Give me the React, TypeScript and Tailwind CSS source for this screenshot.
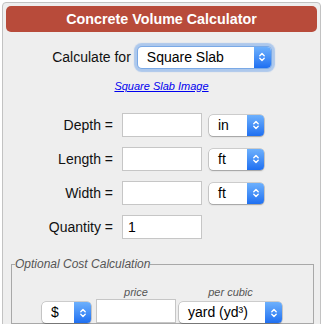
import React from "react";

function Chevrons() {
  return (
    <svg width="8" height="12" viewBox="0 0 8 12" fill="none">
      <path d="M1.8 4.8 L4 2.6 L6.2 4.8" stroke="white" strokeWidth="1.4" strokeLinecap="round" strokeLinejoin="round" />
      <path d="M1.8 7.2 L4 9.4 L6.2 7.2" stroke="white" strokeWidth="1.4" strokeLinecap="round" strokeLinejoin="round" />
    </svg>
  );
}

function FakeSelect({ value, w, focused }: { value: string; w: string; focused?: boolean }) {
  return (
    <div
      className={
        "flex h-[21px] items-stretch rounded-[4px] bg-white overflow-hidden " +
        w +
        (focused
          ? " shadow-[0_0_0_1px_#7aa9e6,0_0_1px_3.5px_rgba(120,170,235,0.55)]"
          : " shadow-[0_0_0_0.5px_rgba(0,0,0,0.28),0_1px_1.5px_rgba(0,0,0,0.22)]")
      }
    >
      <span className="flex-1 pl-[9px] text-[14px] leading-[21px] text-black whitespace-nowrap">{value}</span>
      <span className="w-[17px] flex items-center justify-center bg-gradient-to-b from-[#6db0fc] to-[#1e6ff1]">
        <Chevrons />
      </span>
    </div>
  );
}

function Row({ label, unit, value }: { label: string; unit?: string; value?: string }) {
  return (
    <div className="flex h-[24px] items-center">
      <span className="w-[70px] text-right text-[14px] text-[#111]">{label}</span>
      <input
        defaultValue={value}
        className="ml-[9px] h-[24px] w-[80px] border border-[#c6c6c6] bg-white px-[5px] text-[14px] text-black outline-none"
        style={{ fontFamily: "inherit" }}
      />
      {unit && (
        <div className="ml-[7px]">
          <FakeSelect value={unit} w="w-[55px]" />
        </div>
      )}
    </div>
  );
}

export default function App() {
  return (
    <div
      className="h-[324px] w-[324px] overflow-hidden bg-white pt-[2px] pl-[2px]"
      style={{ fontFamily: '"Liberation Sans", Arial, Helvetica, sans-serif' }}
    >
      <div className="w-[319px] h-[340px] rounded-[4px] border border-[#c2c2c2] bg-[#eeeeee] p-[3px]">
        <div className="h-[26px] rounded-[5px] bg-[#b84b3a] text-center text-[14.3px] font-bold leading-[26px] text-white">
          Concrete Volume Calculator
        </div>

        <div className="mt-[15px] flex h-[20px] items-center justify-center gap-[7px]">
          <span className="text-[14px] text-[#111]">Calculate for</span>
          <FakeSelect value="Square Slab" w="w-[133px]" focused />
        </div>

        <div className="mt-[13px] text-center text-[11px] leading-[13px]">
          <a href="#" className="italic text-[#0000ee] underline">
            Square Slab Image
          </a>
        </div>

        <div className="mt-[20px] flex flex-col gap-[10px] pl-[37px]">
          <Row label="Depth =" unit="in" />
          <Row label="Length =" unit="ft" />
          <Row label="Width =" unit="ft" />
          <Row label="Quantity =" value="1" />
        </div>

        <fieldset className="ml-[5px] mt-[18px] w-[303px] border border-[#a8a8a8] px-[3px] pt-[15px]">
          <legend className="text-[12px] italic leading-[14px] text-[#555]">Optional Cost Calculation</legend>
          <div className="ml-[27px] flex items-end text-[11px] italic leading-[13px] text-[#555]">
            <span className="w-[49px]"></span>
            <span className="ml-[5px] w-[80px] text-center">price</span>
            <span className="ml-[3px] w-[103px] text-center">per cubic</span>
          </div>
          <div className="ml-[27px] flex items-end">
            <FakeSelect value="$" w="w-[49px]" />
            <input
              className="ml-[5px] h-[24px] w-[80px] border border-[#c6c6c6] bg-white px-[5px] text-[14px] outline-none"
            />
            <div className="ml-[3px]">
              <FakeSelect value="yard (yd³)" w="w-[103px]" />
            </div>
          </div>
        </fieldset>
      </div>
    </div>
  );
}
